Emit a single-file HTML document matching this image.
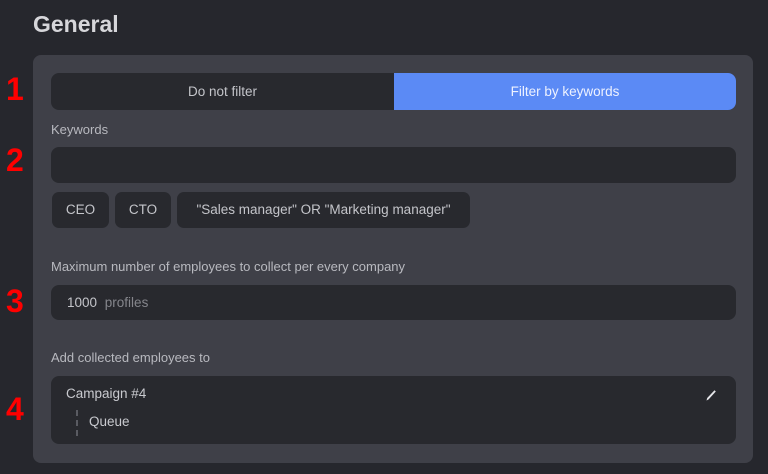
<!DOCTYPE html>
<html><head><meta charset="utf-8"><style>
*{margin:0;padding:0;box-sizing:border-box}
body{width:768px;height:474px;background:#26272d;font-family:"Liberation Sans",sans-serif;position:relative;overflow:hidden;color:#c9cacf}
.abs{position:absolute}
h1{position:absolute;left:33px;top:11px;font-size:23px;font-weight:bold;color:#d6d6da}
.panel{left:33px;top:55px;width:720px;height:408px;background:#3f4048;border-radius:8px}
.num{color:#f00;font-weight:bold;font-size:32px;left:6px}
.f{background:#28292e;border-radius:8px}
.lbl{font-size:13px;color:#b8b9bf}
.chip{background:#28292e;border-radius:7px;top:192px;height:36px;font-size:13.5px;line-height:36px;text-align:center;color:#c4c5ca}
</style></head><body>
<h1>General</h1>
<div class="abs panel"></div>
<div class="abs num" style="top:71px">1</div>
<div class="abs num" style="top:142px">2</div>
<div class="abs num" style="top:283px">3</div>
<div class="abs num" style="top:391px">4</div>
<div class="abs f" style="left:51px;top:73px;width:685px;height:37px"></div>
<div class="abs" style="left:51px;top:73px;width:343px;height:37px;line-height:37px;text-align:center;font-size:13.5px;color:#c4c5ca">Do not filter</div>
<div class="abs" style="left:394px;top:73px;width:342px;height:37px;line-height:37px;text-align:center;font-size:13.5px;color:#eef2ff;background:#5b8af5;border-radius:0 8px 8px 0">Filter by keywords</div>
<div class="abs lbl" style="left:51px;top:122px">Keywords</div>
<div class="abs f" style="left:51px;top:147px;width:685px;height:36px"></div>
<div class="abs chip" style="left:52px;width:57px">CEO</div>
<div class="abs chip" style="left:115px;width:56px">CTO</div>
<div class="abs chip" style="left:177px;width:293px">"Sales manager" OR "Marketing manager"</div>
<div class="abs lbl" style="left:51px;top:259px">Maximum number of employees to collect per every company</div>
<div class="abs f" style="left:51px;top:285px;width:685px;height:35px;line-height:35px;padding-left:16px;font-size:13.5px;color:#c4c5ca">1000 <span style="color:#85868c;margin-left:4px">profiles</span></div>
<div class="abs lbl" style="left:51px;top:350px">Add collected employees to</div>
<div class="abs f" style="left:51px;top:376px;width:685px;height:68px"></div>
<div class="abs" style="left:66px;top:386px;font-size:13.5px;color:#c9cacf">Campaign #4</div>
<div class="abs" style="left:76px;top:410px;width:0;height:26px;border-left:2px dashed #5a5b62"></div>
<div class="abs" style="left:89px;top:414px;font-size:13.5px;color:#c9cacf">Queue</div>
<svg class="abs" style="left:704px;top:388px" width="14" height="14" viewBox="0 0 14 14"><path d="M2.5 12.5 L3.2 10 L10.5 2.2 L11.8 3.5 L4.5 11.5 Z" fill="#e6e6ea"/></svg>
</body></html>
